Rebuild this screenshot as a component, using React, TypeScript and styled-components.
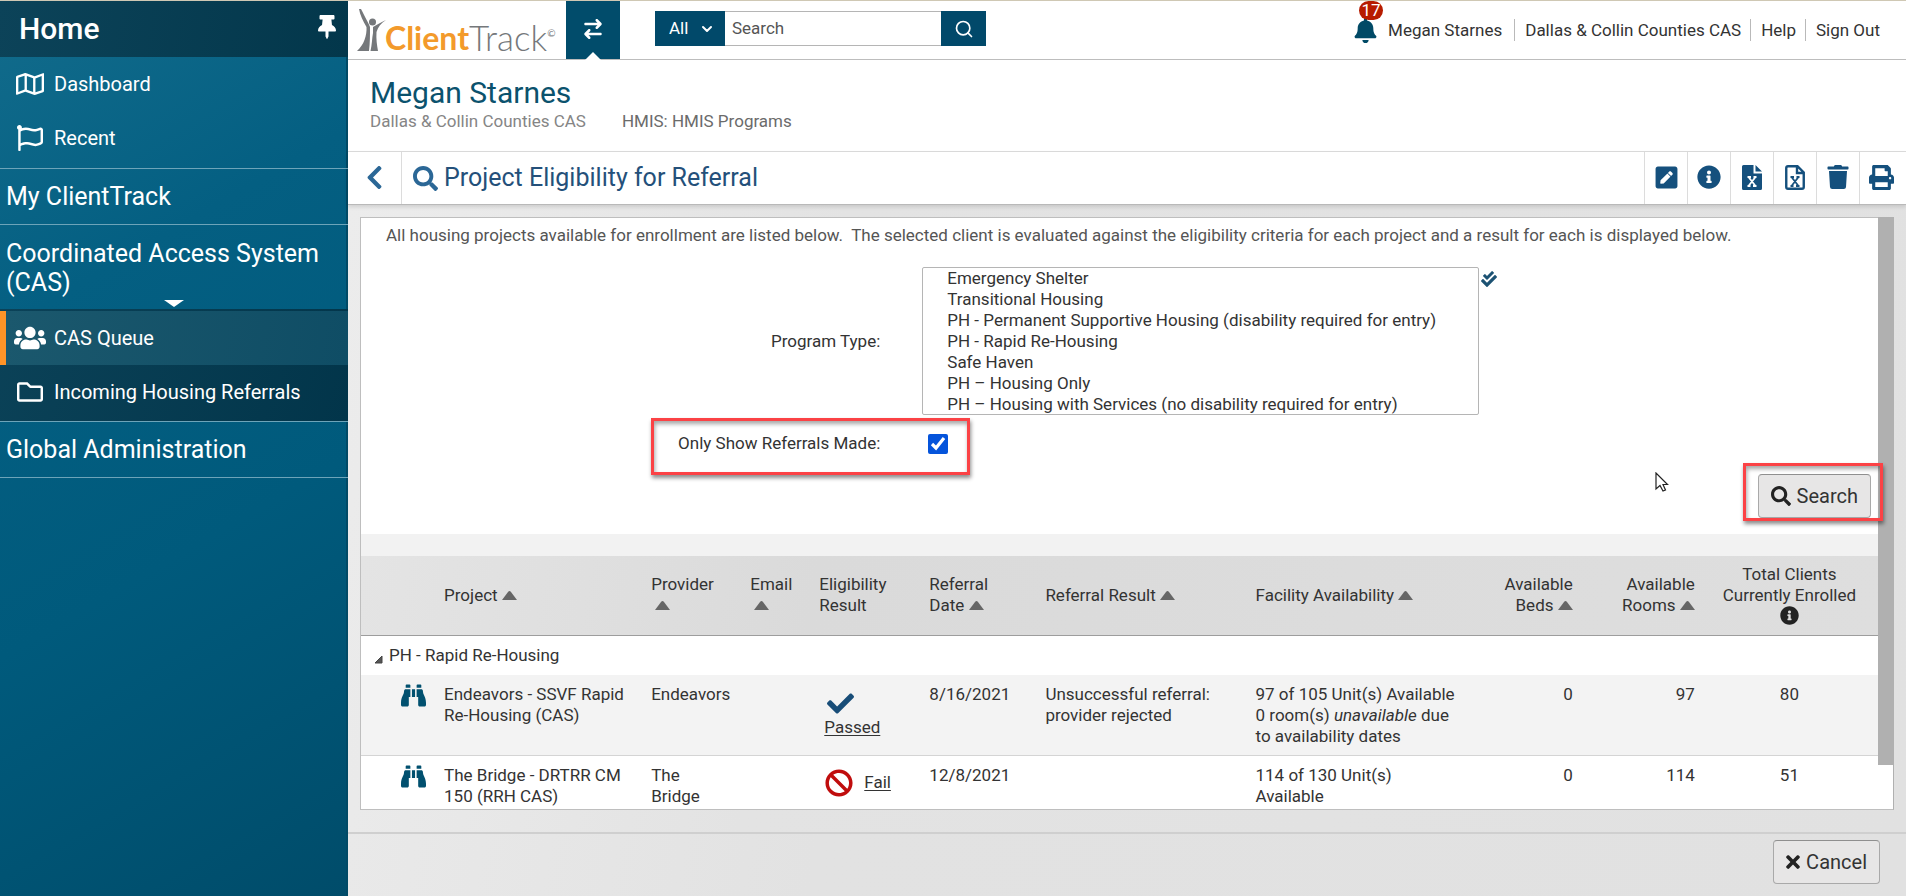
import React from "react";
import styled, { createGlobalStyle, css } from "styled-components";
import {
  FaThumbtack,
  FaRegMap,
  FaRegFlag,
  FaUsers,
  FaRegFolder,
  FaPenSquare,
  FaInfoCircle,
  FaTrash,
  FaPrint,
  FaBinoculars,
  FaCheck,
  FaBan,
  FaTimes,
  FaSearch,
  FaBell,
  FaCheckDouble,
  FaChevronLeft,
} from "react-icons/fa";
import { FaArrowRightArrowLeft } from "react-icons/fa6";
import { ChevronDown, Search } from "lucide-react";

const GlobalStyle = createGlobalStyle`
  *, *::before, *::after { box-sizing: border-box; }
  body {
    margin: 0;
    font-family: Roboto, "Liberation Sans", sans-serif;
    font-size: 17px;
    line-height: 21px;
    color: #333;
  }
  button, input, select { font: inherit; color: inherit; margin: 0; }
  button { cursor: pointer; }
  a { color: inherit; text-decoration: none; }
  h1, h2, p, ul { margin: 0; padding: 0; font-weight: 400; }
  ul { list-style: none; }
  svg { display: block; flex: none; }
`;

const Shell = styled.div`
  display: flex;
  height: 100vh;
  min-height: 600px;
  border-top: 1px solid #cfc8b4;
`;

/* Sidebar */

const Sidebar = styled.nav`
  flex: 0 0 348px;
  color: #fff;
  background: linear-gradient(150deg, #126c8c 0%, #045f82 30%, #005a7c 60%, #004c6a 100%);
  box-shadow: inset -2px 0 0 #014a66;
`;

const HomeBar = styled.div`
  display: flex;
  align-items: center;
  justify-content: space-between;
  height: 56px;
  padding: 0 9px 0 19px;
  background: linear-gradient(100deg, #0c4359, #03374b);
`;

const HomeTitle = styled.h2`
  font-size: 30px;
  line-height: 36px;
  font-weight: 500;
`;

const PinButton = styled.button`
  padding: 0;
  border: 0;
  background: none;
  align-self: flex-start;
  margin-top: 14px;
`;

const NavGroup = styled.ul`
  padding-bottom: 3px;
`;

const NavLink = styled.a<{ $active?: boolean }>`
  display: grid;
  grid-template-columns: 36px 1fr;
  align-items: center;
  height: 54px;
  padding-left: 12px;
  border-left: 0 solid #ff9427;
  font-size: 20px;
  line-height: 24px;
  ${(p) =>
    p.$active &&
    css`
      padding-left: 6px;
      border-left-width: 6px;
      background: linear-gradient(100deg, #1b586d, #0f4d65);
    `}
  svg {
    justify-self: center;
  }
  span {
    padding-left: 6px;
  }
`;

const Section = styled.a`
  display: block;
  padding: 13px 6px;
  border-top: 1px solid #6da4b9;
  font-size: 25px;
  line-height: 29px;
`;

const OpenSection = styled(Section)`
  padding-top: 14px;
  padding-bottom: 0;
`;

const Caret = styled.svg`
  margin: 3px auto 2px;
`;

const SubMenu = styled.ul`
  padding: 2px 0;
  background: linear-gradient(110deg, #0b4258, #02354a);
`;

const SidebarEnd = styled.div`
  border-top: 1px solid #6da4b9;
`;

/* Top bar */

const Content = styled.div`
  flex: 1;
  min-width: 0;
  display: flex;
  flex-direction: column;
  background: #fff;
`;

const TopBar = styled.header`
  display: flex;
  flex: none;
  align-items: center;
  height: 59px;
  padding: 0 26px 0 9px;
  border-bottom: 1px solid #bdbdbd;
`;

const Logo = styled.a`
  display: flex;
  align-items: flex-end;
  align-self: stretch;
  width: 209px;
  padding-bottom: 3px;
  font-family: Lato, sans-serif;
  font-size: 32px;
  line-height: 36px;
  white-space: nowrap;
  color: #75787b;
  svg {
    margin: 0 -2px 4px 0;
  }
  b {
    font-weight: 700;
    color: #f39a2b;
  }
  span {
    margin-bottom: 1px;
    font-size: 35px;
    font-weight: 300;
  }
  sup {
    align-self: flex-start;
    margin-top: 27px;
    font-size: 10px;
    line-height: 10px;
  }
`;

const SwapButton = styled.button`
  position: relative;
  display: grid;
  place-items: center;
  align-self: stretch;
  width: 54px;
  padding: 0 0 2px;
  border: 0;
  color: #fff;
  background: #014c6b;
  &::after {
    content: "";
    position: absolute;
    bottom: -1px;
    border: 8px solid transparent;
    border-top-width: 0;
    border-bottom-color: #fff;
  }
`;

const SearchGroup = styled.form`
  display: flex;
  height: 35px;
  margin-left: 35px;
  margin-bottom: 3px;
`;

const ScopePicker = styled.label`
  position: relative;
  display: flex;
  align-items: center;
  color: #fff;
  background: #01496a;
  svg {
    position: absolute;
    right: 10px;
    pointer-events: none;
  }
`;

const ScopeSelect = styled.select`
  appearance: none;
  width: 70px;
  height: 35px;
  padding: 0 14px;
  border: 0;
  background: transparent;
  outline: 0;
`;

const SearchInput = styled.input`
  width: 216px;
  padding: 0 7px;
  border: 1px solid #b5b5b5;
  border-width: 1px 0;
  background: #fff;
  &::placeholder {
    color: #555;
    opacity: 1;
  }
`;

const SearchSubmit = styled.button`
  display: grid;
  place-items: center;
  width: 45px;
  padding: 0;
  border: 0;
  color: #fff;
  background: #01496a;
`;

const UserLinks = styled.div`
  display: flex;
  align-items: center;
  margin-left: auto;
  a {
    padding: 0 9px 0 10px;
    border-left: 1px solid #b9b9b9;
    line-height: 22px;
  }
  a:nth-of-type(1) {
    border-left: 0;
    padding-right: 12px;
  }
  a:last-child {
    padding-right: 0;
  }
`;

const BellButton = styled.button`
  position: relative;
  padding: 0;
  border: 0;
  background: none;
  color: #014a66;
`;

const Badge = styled.span`
  position: absolute;
  left: 6px;
  top: -17px;
  width: 24px;
  height: 19px;
  border-radius: 10px;
  background: #b71c00;
  color: #fff;
  font-size: 17px;
  line-height: 18px;
`;

/* Client heading and page title */

const ClientHeader = styled.div`
  flex: none;
  height: 92px;
  padding: 15px 22px 0;
  border-bottom: 1px solid #dcdcdc;
  h1 {
    font-size: 30px;
    line-height: 36px;
    color: #0b526d;
  }
`;

const ClientMeta = styled.p`
  display: flex;
  gap: 36px;
  color: #858585;
  span:last-child {
    color: #6b6b6b;
  }
`;

const TitleBar = styled.div`
  position: relative;
  display: flex;
  flex: none;
  align-items: stretch;
  height: 53px;
  border-bottom: 1px solid #b9b9b9;
  box-shadow: 0 2px 4px rgba(0, 0, 0, 0.12);
`;

const BackButton = styled.button`
  display: grid;
  place-items: center;
  width: 54px;
  padding: 0 0 1px;
  border: 0;
  border-right: 1px solid #dcdcdc;
  background: none;
  color: #2b6796;
`;

const PageTitle = styled.h2`
  display: flex;
  align-items: center;
  gap: 6px;
  padding-left: 11px;
  font-size: 25px;
  line-height: 30px;
  color: #24507a;
  svg {
    color: #2b6796;
  }
`;

const Tools = styled.div`
  display: flex;
  margin-left: auto;
  padding-right: 4px;
`;

const ToolButton = styled.button`
  display: grid;
  place-items: center;
  width: 43px;
  padding: 0 0 2px;
  border: 0;
  border-left: 1px solid #dcdcdc;
  background: none;
  color: #15507d;
`;

/* Work area */

const Work = styled.main`
  flex: 1;
  min-height: 0;
  padding: 12px 12px 22px 12px;
  background: linear-gradient(100deg, #ececec, #e3e3e3 30%, #e1e1e1);
`;

const Panel = styled.section`
  position: relative;
  display: flex;
  height: 100%;
  border: 1px solid #bebebe;
  border-right-color: #b0b0b0;
  background: #fff;
`;

const PanelBody = styled.div`
  flex: 1;
  min-width: 0;
  display: flex;
  flex-direction: column;
`;

const ScrollTrack = styled.div`
  flex: 0 0 16px;
  margin: -1px -1px 0 0;
`;

const ScrollThumb = styled.div`
  height: calc(100% - 44px);
  background: #b0b0b0;
`;

const Intro = styled.p`
  padding: 7px 25px 21px;
  color: #555;
  white-space: pre-wrap;
`;

const FieldRow = styled.div`
  display: grid;
  grid-template-columns: 37% 1fr;
  align-items: center;
  margin-bottom: 18px;
`;

const FieldLabel = styled.label`
  position: relative;
  padding-right: 42px;
  text-align: right;
`;

const FieldValue = styled.div`
  display: flex;
  align-items: flex-start;
  gap: 2px;
  svg {
    margin-top: 4px;
    color: #1c5273;
  }
`;

const ProgramList = styled.select`
  width: 557px;
  height: 148px;
  padding: 0;
  border: 1px solid #b5b5b5;
  background: #fff;
  overflow: hidden;
  option {
    height: 21px;
    min-height: 21px;
    padding: 0 0 0 24px;
    line-height: 21px;
  }
`;

const CheckBox = styled.input`
  width: 20px;
  height: 20px;
  margin: 0 0 0 6px;
  accent-color: #0554db;
`;

const Highlight = styled.span`
  position: absolute;
  pointer-events: none;
  border: 3px solid #fb4245;
  box-shadow: 1px 3px 4px rgba(0, 0, 0, 0.45), inset 1px 3px 4px rgba(0, 0, 0, 0.35);
`;

const CheckHighlight = styled(Highlight)`
  top: -15px;
  right: -48px;
  width: 319px;
  height: 57px;
`;

const SearchHighlight = styled(Highlight)`
  top: -11px;
  right: -12px;
  width: 140px;
  height: 58px;
`;

const Pointer = styled.svg`
  position: absolute;
  top: -2px;
  right: 202px;
`;

const ActionRow = styled.div`
  display: flex;
  justify-content: flex-end;
  padding: 2px 7px 16px;
`;

const ActionHolder = styled.div`
  position: relative;
`;

const ActionButton = styled.button`
  display: flex;
  align-items: center;
  gap: 6px;
  height: 44px;
  padding: 0 12px;
  border: 1px solid #a9a9a9;
  border-top-color: #8f8f8f;
  border-radius: 4px;
  background: #e7e6e6;
  font-size: 20px;
  line-height: 24px;
  svg {
    color: #222;
  }
`;

/* The cross glyph is narrower than its square icon box */
const CancelButton = styled(ActionButton)`
  svg {
    margin: 0 -3px;
  }
`;

/* Results table */

const ResultsPane = styled.div`
  flex: 1;
  min-height: 0;
  overflow: hidden;
  padding-top: 22px;
  background: #f2f2f2;
`;

const Results = styled.table`
  width: 100%;
  table-layout: fixed;
  border-collapse: collapse;
  background: #fff;
  th,
  td {
    padding: 0 10px 0 6px;
    text-align: left;
    font-weight: 400;
  }
`;

const HeadRow = styled.tr`
  height: 79px;
  border-bottom: 1px solid #9d9d9d;
  background: linear-gradient(100deg, #e4e4e4, #dadada 30%, #dedede);
`;

const GroupRow = styled.tr`
  height: 40px;
  td {
    padding-left: 13px;
  }
`;

const GroupToggle = styled.button`
  display: flex;
  align-items: center;
  gap: 6px;
  padding: 0;
  border: 0;
  background: none;
  svg {
    margin-top: 8px;
  }
`;

const DataRow = styled.tr<{ $shaded?: boolean }>`
  height: 80px;
  border-bottom: 1px solid #d4d4d4;
  background: ${(p) => (p.$shaded ? "#f3f3f3" : "#fff")};
  td {
    padding-top: 9px;
    padding-bottom: 6px;
    vertical-align: top;
  }
`;

const NumberCell = styled.td`
  && {
    text-align: right;
  }
`;

const NumberHead = styled.th`
  && {
    text-align: right;
  }
`;

const CenterHead = styled.th`
  && {
    text-align: center;
  }
  svg {
    display: inline-block;
    vertical-align: top;
    color: #222;
  }
`;

const CenterCell = styled.td`
  && {
    text-align: center;
  }
`;

const IconCell = styled.td`
  && {
    padding: 8px 12px 0 0;
  }
  svg {
    margin-left: auto;
    color: #01506f;
  }
`;

const Verdict = styled.div<{ $stacked?: boolean }>`
  display: flex;
  flex-direction: ${(p) => (p.$stacked ? "column" : "row")};
  align-items: ${(p) => (p.$stacked ? "flex-start" : "center")};
  gap: ${(p) => (p.$stacked ? "0" : "11px")};
  padding-left: ${(p) => (p.$stacked ? "5px" : "6px")};
  padding-top: ${(p) => (p.$stacked ? "6px" : "4px")};
  svg {
    margin-left: ${(p) => (p.$stacked ? "3px" : "0")};
  }
  a {
    text-decoration: underline;
    text-underline-offset: 2px;
  }
`;

const SortSlot = styled.span`
  white-space: nowrap;
  svg {
    display: inline-block;
    vertical-align: 1px;
  }
`;

const Footer = styled.footer`
  display: flex;
  flex: none;
  justify-content: flex-end;
  height: 64px;
  padding: 6px 26px 0;
  border-top: 2px solid #cfcfcf;
  background: linear-gradient(100deg, #e9e9e9, #e2e2e2 30%, #e1e1e1);
`;

const Sort = () => (
  <>
    <wbr />
    <SortSlot>
      {"\u00a0"}
      <svg width="15" height="9" viewBox="0 0 15 9" aria-hidden="true">
        <path d="M0 9 L6 1 Q7.5 -1 9 1 L15 9 Z" fill="#666" />
      </svg>
    </SortSlot>
  </>
);

const FigureMark = () => (
  <svg width="30" height="44" viewBox="0 0 30 44" aria-hidden="true">
    <g fill="#75787b">
      <path d="M2 1 L4 1 C8 9 11 14 13 19 C13 27 13 35 12 43 L0 43 C7 37 10 27 9.500 19 C6 13 3 7 2 1 Z" />
      <circle cx="15.500" cy="14" r="3.500" />
      <path d="M29 12 C24 15 21 19 19.500 24 C19 31 20 37 21 43 L13.500 43 C15 37 15 30 16 25 L16 19 C20 17 24 14 29 12 Z" />
    </g>
  </svg>
);

const ExcelFile = ({ outlined = false }: { outlined?: boolean }) => (
  <svg width="20" height="25" viewBox="0 0 20 25" aria-hidden="true">
    {outlined ? (
      <path
        d="M3 1.250 H12.500 L18.750 7.500 V22 Q18.750 23.750 17 23.750 H3 Q1.250 23.750 1.250 22 V3 Q1.250 1.250 3 1.250 Z M12 1.500 V8 H18.500"
        fill="none"
        stroke="currentColor"
        strokeWidth="2.400"
      />
    ) : (
      <path
        d="M1.500 0 H11.500 V8.500 H20 V23.500 Q20 25 18.500 25 H1.500 Q0 25 0 23.500 V1.500 Q0 0 1.500 0 Z M13.500 0 L20 6.500 H13.500 Z"
        fill="currentColor"
      />
    )}
    <path
      d="M6.500 12 L13.500 21 M13.500 12 L6.500 21 M5.500 12 H9 M11.500 12 H14.500 M5.500 21 H8.500 M11 21 H14.500"
      fill="none"
      stroke={outlined ? "currentColor" : "#fff"}
      strokeWidth="1.800"
    />
  </svg>
);

const PROGRAM_TYPES = [
  "Emergency Shelter",
  "Transitional Housing",
  "PH - Permanent Supportive Housing (disability required for entry)",
  "PH - Rapid Re-Housing",
  "Safe Haven",
  "PH – Housing Only",
  "PH – Housing with Services (no disability required for entry)",
];

const COLUMN_WIDTHS = [77, 207, 99, 69, 110, 116, 210, 222, 111, 122, 173];

export default function App() {
  return (
    <>
      <GlobalStyle />
      <Shell>
        <Sidebar aria-label="Main">
          <HomeBar>
            <HomeTitle>Home</HomeTitle>
            <PinButton aria-label="Pin menu">
              <FaThumbtack size={24} />
            </PinButton>
          </HomeBar>
          <NavGroup>
            <li>
              <NavLink href="#dashboard">
                <FaRegMap size={28} />
                <span>Dashboard</span>
              </NavLink>
            </li>
            <li>
              <NavLink href="#recent">
                <FaRegFlag size={26} />
                <span>Recent</span>
              </NavLink>
            </li>
          </NavGroup>
          <Section href="#my">My ClientTrack</Section>
          <OpenSection href="#cas">
            Coordinated Access System (CAS)
            <Caret width="20" height="7" viewBox="0 0 20 7" aria-hidden="true">
              <path d="M0 0 H20 L10 7 Z" fill="#fff" />
            </Caret>
          </OpenSection>
          <SubMenu>
            <li>
              <NavLink href="#queue" $active>
                <FaUsers size={32} />
                <span>CAS Queue</span>
              </NavLink>
            </li>
            <li>
              <NavLink href="#incoming">
                <FaRegFolder size={26} />
                <span>Incoming Housing Referrals</span>
              </NavLink>
            </li>
          </SubMenu>
          <Section href="#admin">Global Administration</Section>
          <SidebarEnd />
        </Sidebar>

        <Content>
          <TopBar>
            <Logo href="#home" aria-label="ClientTrack">
              <FigureMark />
              <b>Client</b>
              <span>Track</span>
              <sup>©</sup>
            </Logo>
            <SwapButton aria-label="Switch workspace">
              <FaArrowRightArrowLeft size={20} />
            </SwapButton>
            <SearchGroup onSubmit={(e) => e.preventDefault()}>
              <ScopePicker>
                <ScopeSelect aria-label="Search scope">
                  <option>All</option>
                </ScopeSelect>
                <ChevronDown size={16} strokeWidth={3} />
              </ScopePicker>
              <SearchInput aria-label="Search" placeholder="Search" />
              <SearchSubmit aria-label="Run search">
                <Search size={20} strokeWidth={2} />
              </SearchSubmit>
            </SearchGroup>
            <UserLinks>
              <BellButton aria-label="17 notifications">
                <FaBell size={25} />
                <Badge>17</Badge>
              </BellButton>
              <a href="#profile">Megan Starnes</a>
              <a href="#org">Dallas &amp; Collin Counties CAS</a>
              <a href="#help">Help</a>
              <a href="#signout">Sign Out</a>
            </UserLinks>
          </TopBar>

          <ClientHeader>
            <h1>Megan Starnes</h1>
            <ClientMeta>
              <span>Dallas &amp; Collin Counties CAS</span>
              <span>HMIS: HMIS Programs</span>
            </ClientMeta>
          </ClientHeader>

          <TitleBar>
            <BackButton aria-label="Back">
              <FaChevronLeft size={27} />
            </BackButton>
            <PageTitle>
              <FaSearch size={25} />
              Project Eligibility for Referral
            </PageTitle>
            <Tools>
              <ToolButton aria-label="Edit">
                <FaPenSquare size={25} />
              </ToolButton>
              <ToolButton aria-label="Information">
                <FaInfoCircle size={24} />
              </ToolButton>
              <ToolButton aria-label="Export to Excel">
                <ExcelFile />
              </ToolButton>
              <ToolButton aria-label="Export all to Excel">
                <ExcelFile outlined />
              </ToolButton>
              <ToolButton aria-label="Delete">
                <FaTrash size={24} />
              </ToolButton>
              <ToolButton aria-label="Print">
                <FaPrint size={25} />
              </ToolButton>
            </Tools>
          </TitleBar>

          <Work>
            <Panel>
              <PanelBody>
                <Intro>
                  {
                    "All housing projects available for enrollment are listed below.  The selected client is evaluated against the eligibility criteria for each project and a result for each is displayed below."
                  }
                </Intro>
                <FieldRow>
                  <FieldLabel htmlFor="program-type">Program Type:</FieldLabel>
                  <FieldValue>
                    <ProgramList id="program-type" multiple size={7}>
                      {PROGRAM_TYPES.map((name) => (
                        <option key={name}>{name}</option>
                      ))}
                    </ProgramList>
                    <FaCheckDouble size={16} />
                  </FieldValue>
                </FieldRow>
                <FieldRow>
                  <FieldLabel htmlFor="only-made">
                    Only Show Referrals Made:
                    <CheckHighlight />
                  </FieldLabel>
                  <FieldValue>
                    <CheckBox id="only-made" type="checkbox" defaultChecked />
                  </FieldValue>
                </FieldRow>
                <ActionRow>
                  <ActionHolder>
                    <ActionButton>
                      <FaSearch size={20} />
                      Search
                    </ActionButton>
                    <SearchHighlight />
                    <Pointer width="14" height="20" viewBox="0 0 14 20" aria-hidden="true">
                      <path
                        d="M1 1 V17 L5 13.500 L8 19 L10.500 18 L8 12.500 H12.500 Z"
                        fill="#fff"
                        stroke="#222"
                        strokeWidth="1.200"
                      />
                    </Pointer>
                  </ActionHolder>
                </ActionRow>

                <ResultsPane>
                  <Results>
                    <colgroup>
                      {COLUMN_WIDTHS.map((width, i) => (
                        <col key={i} width={width} />
                      ))}
                    </colgroup>
                    <thead>
                      <HeadRow>
                        <th aria-label="View" />
                        <th>
                          Project
                          <Sort />
                        </th>
                        <th>
                          Provider
                          <br />
                          <Sort />
                        </th>
                        <th>
                          Email
                          <Sort />
                        </th>
                        <th>Eligibility Result</th>
                        <th>
                          Referral
                          <br />
                          Date
                          <Sort />
                        </th>
                        <th>
                          Referral Result
                          <Sort />
                        </th>
                        <th>
                          Facility Availability
                          <Sort />
                        </th>
                        <NumberHead>
                          Available Beds
                          <Sort />
                        </NumberHead>
                        <NumberHead>
                          Available Rooms
                          <Sort />
                        </NumberHead>
                        <CenterHead>
                          Total Clients Currently Enrolled
                          <br />
                          <FaInfoCircle size={19} />
                        </CenterHead>
                      </HeadRow>
                    </thead>
                    <tbody>
                      <GroupRow>
                        <td colSpan={11}>
                          <GroupToggle>
                            <svg width="9" height="9" viewBox="0 0 9 9" aria-hidden="true">
                              <path d="M8 1 V8 H1 Z" fill="#555" stroke="#444" />
                            </svg>
                            PH - Rapid Re-Housing
                          </GroupToggle>
                        </td>
                      </GroupRow>
                      <DataRow $shaded>
                        <IconCell>
                          <FaBinoculars size={25} />
                        </IconCell>
                        <td>Endeavors - SSVF Rapid Re-Housing (CAS)</td>
                        <td>Endeavors</td>
                        <td />
                        <td>
                          <Verdict $stacked>
                            <FaCheck size={27} color="#184d78" />
                            <a href="#passed">Passed</a>
                          </Verdict>
                        </td>
                        <td>8/16/2021</td>
                        <td>Unsuccessful referral: provider rejected</td>
                        <td>
                          97 of 105 Unit(s) Available
                          <br />0 room(s) <em>unavailable</em> due to availability dates
                        </td>
                        <NumberCell>0</NumberCell>
                        <NumberCell>97</NumberCell>
                        <CenterCell>80</CenterCell>
                      </DataRow>
                      <DataRow>
                        <IconCell>
                          <FaBinoculars size={25} />
                        </IconCell>
                        <td>The Bridge - DRTRR CM 150 (RRH CAS)</td>
                        <td>
                          The
                          <br />
                          Bridge
                        </td>
                        <td />
                        <td>
                          <Verdict>
                            <FaBan size={28} color="#c00d0d" />
                            <a href="#fail">Fail</a>
                          </Verdict>
                        </td>
                        <td>12/8/2021</td>
                        <td />
                        <td>
                          114 of 130 Unit(s)
                          <br />
                          Available
                        </td>
                        <NumberCell>0</NumberCell>
                        <NumberCell>114</NumberCell>
                        <CenterCell>51</CenterCell>
                      </DataRow>
                    </tbody>
                  </Results>
                </ResultsPane>
              </PanelBody>
              <ScrollTrack>
                <ScrollThumb />
              </ScrollTrack>
            </Panel>
          </Work>

          <Footer>
            <CancelButton>
              <FaTimes size={20} />
              Cancel
            </CancelButton>
          </Footer>
        </Content>
      </Shell>
    </>
  );
}
